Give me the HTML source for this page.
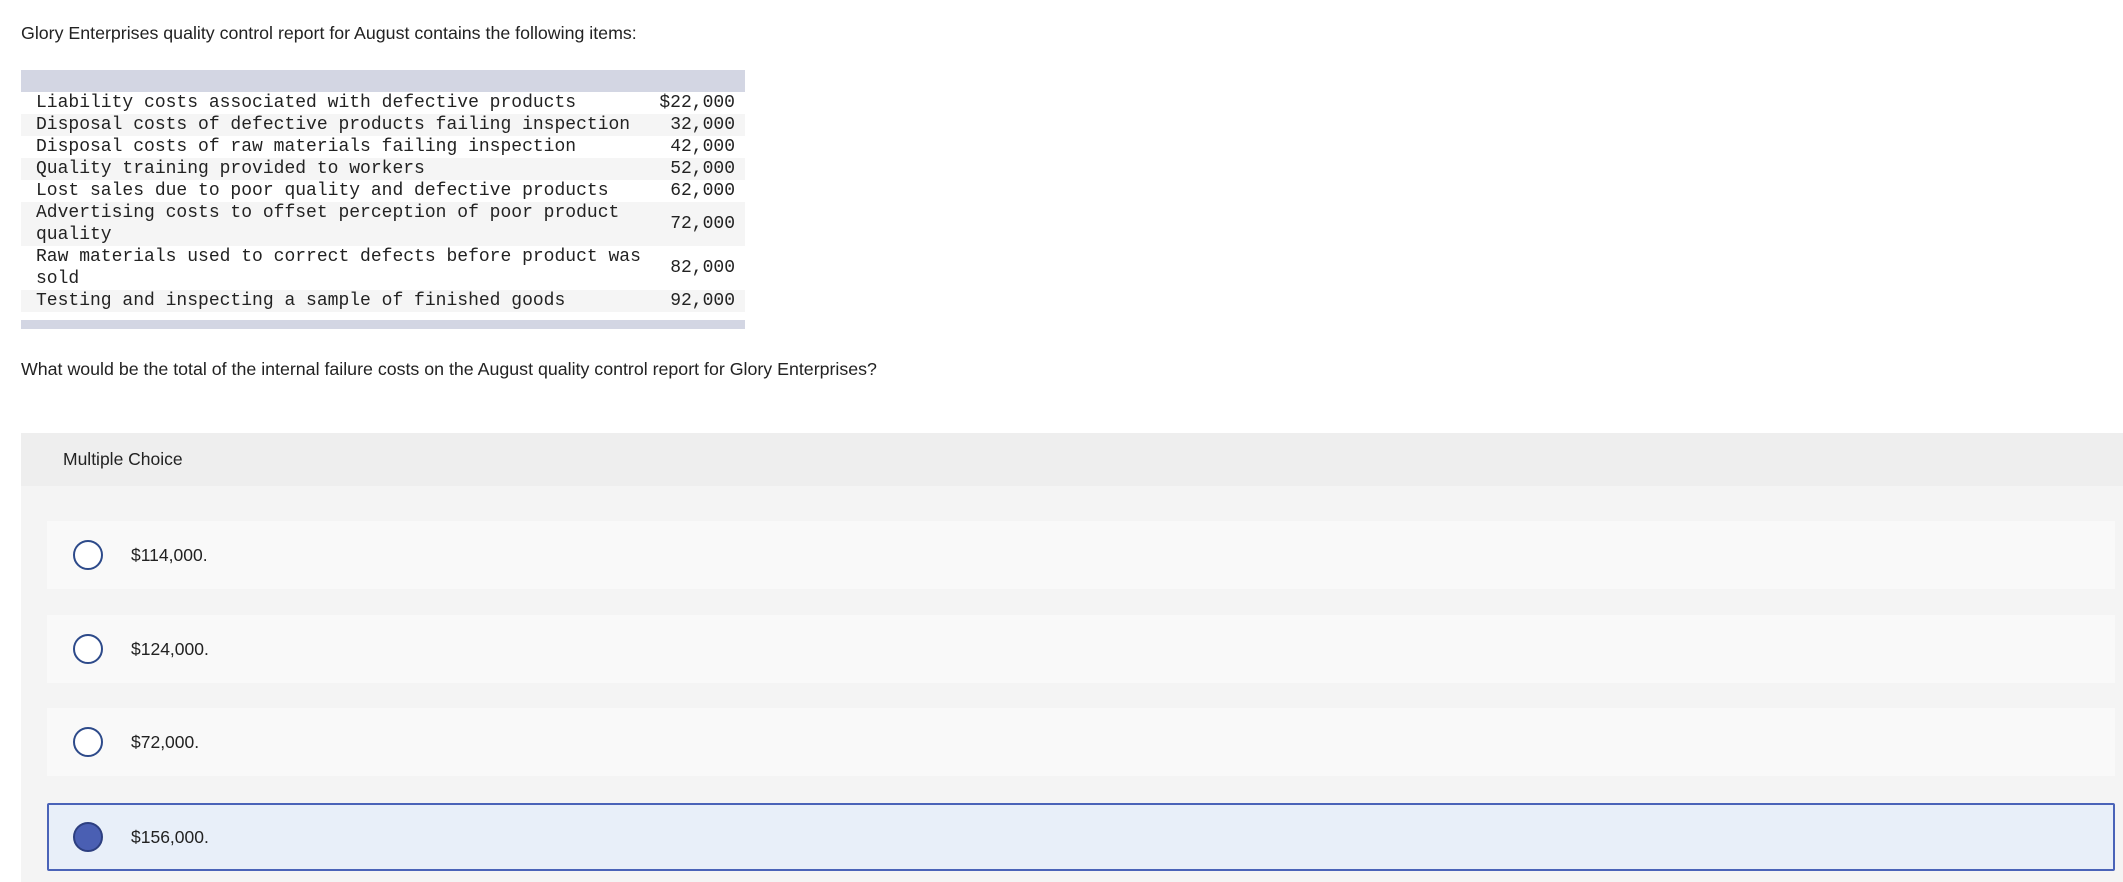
<!DOCTYPE html>
<html><head><meta charset="utf-8"><style>
body{margin:0;width:2123px;height:882px;background:#fff;font-family:"Liberation Sans",sans-serif;color:#222;overflow:hidden;position:relative}
.t{position:absolute;left:21px;font-size:17.8px}
table{position:absolute;left:21px;top:70px;width:724px;border-collapse:collapse;font-family:"Liberation Mono",monospace;font-size:18px;color:#222}
td{padding:0;line-height:22px;vertical-align:middle}
td.l{padding-left:15px}
td.r{text-align:right;padding-right:10px;white-space:nowrap}
tr.g td{background:#f5f5f5}
tr.h td{background:#d3d6e3;height:22px}
.foot{position:absolute;left:21px;top:320px;width:724px;height:9px;background:#d3d6e3}
.panel{position:absolute;left:21px;top:433px;width:2102px;height:449px;background:#f4f4f4}
.ph{height:53px;background:#eeeeee;font-size:17.5px;line-height:53px;padding-left:42px}
.opt{position:absolute;left:26px;width:2068px;height:68px;background:#f9f9f9;box-sizing:border-box}
.opt .c{position:absolute;left:26px;top:19px;width:30px;height:30px;border:2px solid #2d4a8a;border-radius:50%;box-sizing:border-box;background:#fff}
.opt span{position:absolute;left:84px;top:0;line-height:68px;font-size:17.5px}
.sel{background:#e8eff9;border:2px solid #4a63b8;border-radius:2px}
.sel .c{background:#4a5fb3;border-color:#2d3f80;left:24px;top:17px}
.sel span{left:82px;line-height:64px}
</style></head><body>
<div class="t" style="top:23px">Glory Enterprises quality control report for August contains the following items:</div>
<table>
<tr class="h"><td></td><td></td></tr>
<tr><td class="l">Liability costs associated with defective products</td><td class="r">$22,000</td></tr>
<tr class="g"><td class="l">Disposal costs of defective products failing inspection</td><td class="r">32,000</td></tr>
<tr><td class="l">Disposal costs of raw materials failing inspection</td><td class="r">42,000</td></tr>
<tr class="g"><td class="l">Quality training provided to workers</td><td class="r">52,000</td></tr>
<tr><td class="l">Lost sales due to poor quality and defective products</td><td class="r">62,000</td></tr>
<tr class="g"><td class="l">Advertising costs to offset perception of poor product quality</td><td class="r">72,000</td></tr>
<tr><td class="l">Raw materials used to correct defects before product was sold</td><td class="r">82,000</td></tr>
<tr class="g"><td class="l">Testing and inspecting a sample of finished goods</td><td class="r">92,000</td></tr>
</table>
<div class="foot"></div>
<div class="t" style="top:359px">What would be the total of the internal failure costs on the August quality control report for Glory Enterprises?</div>
<div class="panel">
<div class="ph">Multiple Choice</div>
<div class="opt" style="top:88px"><div class="c"></div><span>$114,000.</span></div>
<div class="opt" style="top:182px"><div class="c"></div><span>$124,000.</span></div>
<div class="opt" style="top:275px"><div class="c"></div><span>$72,000.</span></div>
<div class="opt sel" style="top:370px"><div class="c"></div><span>$156,000.</span></div>
</div>
</body></html>
